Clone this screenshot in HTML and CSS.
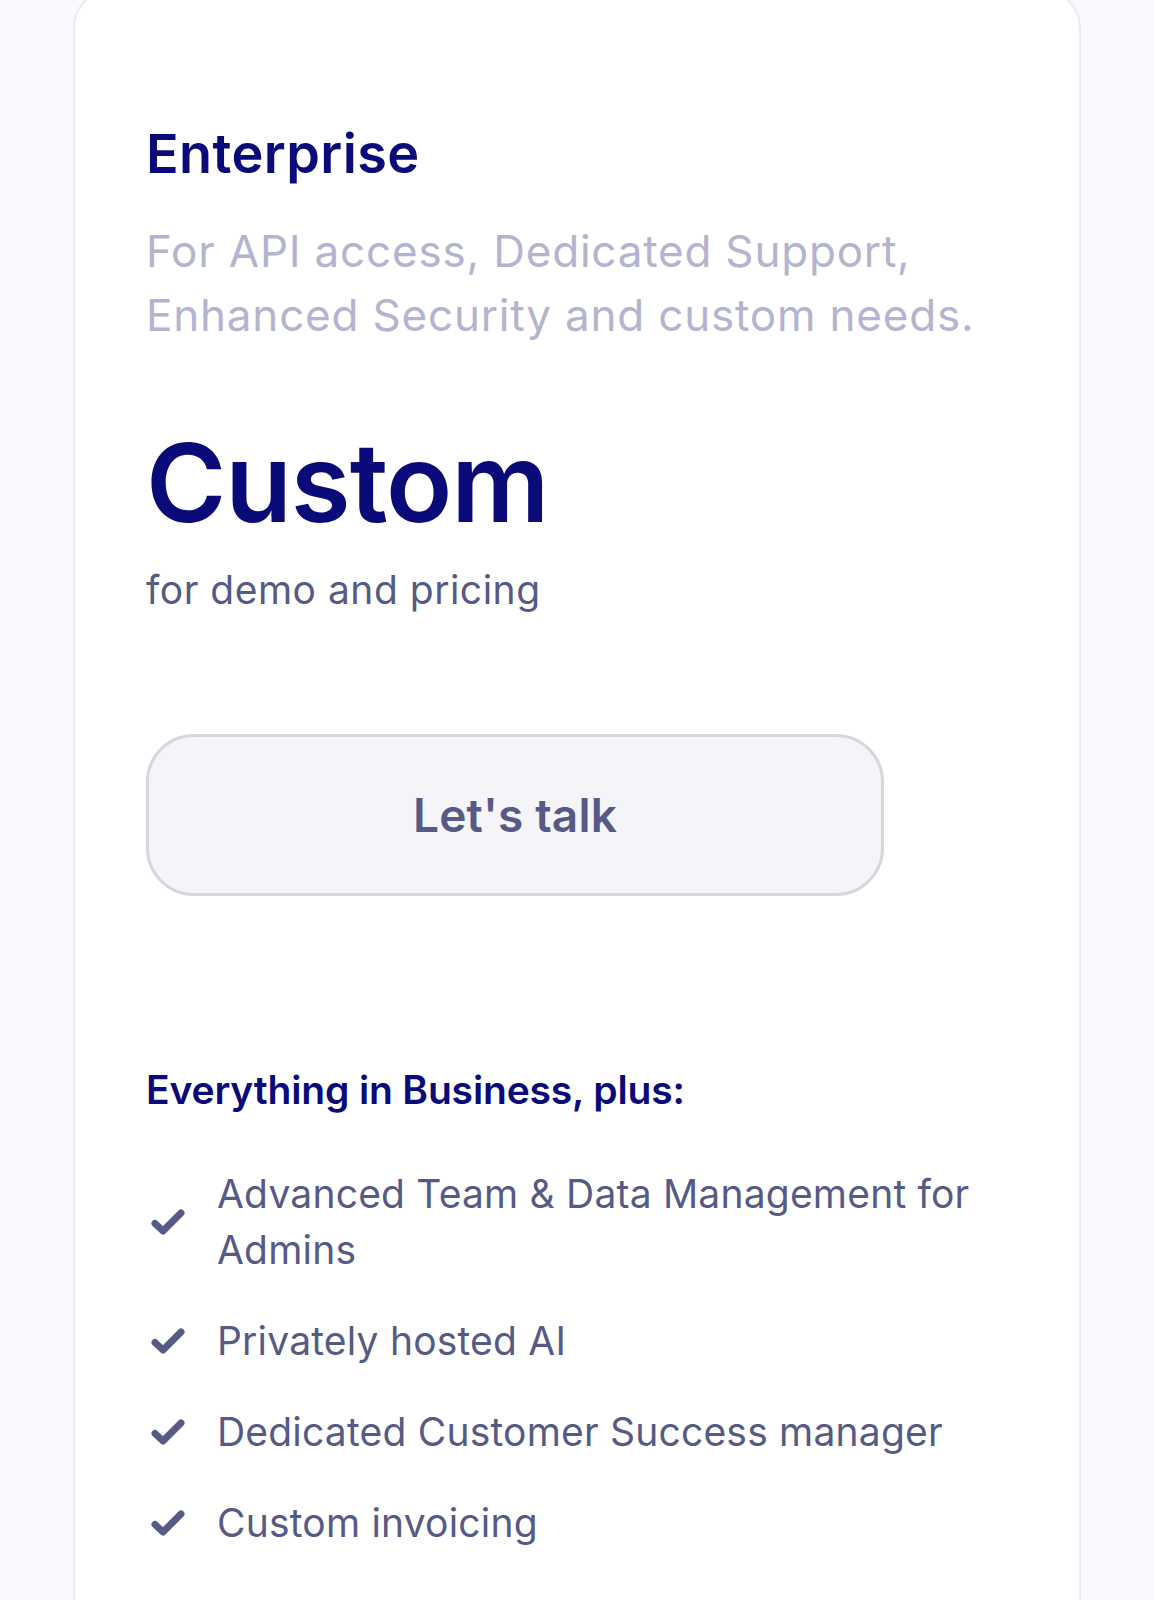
FILE: index.html
```html
<!DOCTYPE html>
<html lang="en">
<head>
<meta charset="utf-8">
<title>Enterprise plan</title>
<link rel="stylesheet" href="styles.css">
</head>
<body>
  <main class="page">
    <section class="card">
      <h2 class="plan-name">Enterprise</h2>
      <p class="plan-desc">For API access, Dedicated Support, Enhanced Security and custom needs.</p>
      <div class="price">Custom</div>
      <p class="price-note">for demo and pricing</p>
      <button class="cta" type="button">Let's talk</button>
      <h3 class="features-title">Everything in Business, plus:</h3>
      <ul class="features">
        <li class="feature">
          <svg class="check" viewBox="0 0 34 28" aria-hidden="true"><path d="M4 15.5 L12 23 L30 5"/></svg>
          <span>Advanced Team &amp; Data Management for Admins</span>
        </li>
        <li class="feature">
          <svg class="check" viewBox="0 0 34 28" aria-hidden="true"><path d="M4 15.5 L12 23 L30 5"/></svg>
          <span>Privately hosted AI</span>
        </li>
        <li class="feature">
          <svg class="check" viewBox="0 0 34 28" aria-hidden="true"><path d="M4 15.5 L12 23 L30 5"/></svg>
          <span>Dedicated Customer Success manager</span>
        </li>
        <li class="feature">
          <svg class="check" viewBox="0 0 34 28" aria-hidden="true"><path d="M4 15.5 L12 23 L30 5"/></svg>
          <span>Custom invoicing</span>
        </li>
      </ul>
    </section>
  </main>
</body>
</html>
```

FILE: styles.css
```css
* { box-sizing: border-box; }

html, body {
  margin: 0;
  padding: 0;
  background: #f9f9fe;
  font-family: Inter, "Open Sans", "Liberation Sans", sans-serif;
}

.page {
  height: 1600px;
  overflow: hidden;
  padding-left: 73px;
}

.card {
  width: 1008px;
  margin-top: -12px;
  background: #ffffff;
  border: 2px solid #ebebf1;
  border-radius: 40px;
  padding: 132px 71px 200px 71px;
}

.plan-name {
  margin: 0;
  font-size: 54px;
  line-height: 64px;
  font-weight: 600;
  color: #0a0a78;
  letter-spacing: 0.4px;
}

.plan-desc {
  margin: 33px 0 0;
  font-size: 44px;
  line-height: 64px;
  font-weight: 400;
  color: #b4b4cf;
  letter-spacing: 0.8px;
}

.price {
  margin-top: 70px;
  font-size: 109px;
  line-height: 130px;
  font-weight: 600;
  color: #0a0a78;
  letter-spacing: -1.1px;
}

.price-note {
  margin: 15px 0 0;
  font-size: 39px;
  line-height: 56px;
  color: #565a84;
  letter-spacing: 0.5px;
}

.cta {
  display: block;
  margin-top: 116px;
  width: 738px;
  height: 162px;
  border: 3px solid #d6d6de;
  border-radius: 48px;
  background: #f4f4f9;
  font-family: inherit;
  font-size: 46px;
  font-weight: 600;
  color: #565a84;
  letter-spacing: 0.2px;
  cursor: pointer;
}

.features-title {
  margin: 166px 0 0;
  font-size: 39px;
  line-height: 56px;
  font-weight: 600;
  color: #0a0a78;
  letter-spacing: -0.15px;
}

.features {
  list-style: none;
  margin: 48px 0 0;
  padding: 0;
  display: flex;
  flex-direction: column;
  gap: 35px;
}

.feature {
  display: flex;
  align-items: center;
  gap: 32px;
  font-size: 39px;
  line-height: 56px;
  color: #565a84;
  letter-spacing: 0.2px;
}

.check {
  flex: none;
  width: 34px;
  height: 28px;
  margin-left: 5px;
  fill: none;
  stroke: #565a84;
  stroke-width: 7;
  stroke-linecap: round;
  stroke-linejoin: round;
}
```
